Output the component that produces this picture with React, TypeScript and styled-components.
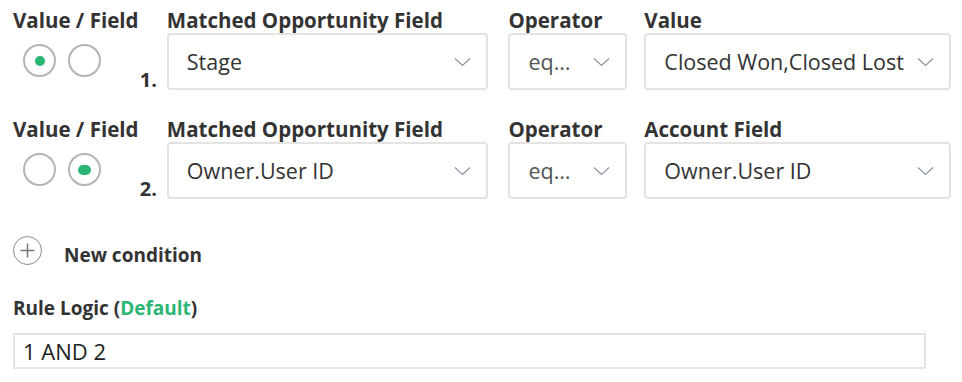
import styled, { createGlobalStyle } from "styled-components";

const GlobalStyle = createGlobalStyle`
  body {
    margin: 0;
    background: #fff;
    font-family: "Open Sans", "Noto Sans", sans-serif;
    color: #333;
  }
`;

const Page = styled.div`
  padding: 7px 11px 0 13px;
  width: 962px;
  box-sizing: border-box;
`;

const ConditionRow = styled.div`
  display: flex;
  align-items: flex-start;
  margin-bottom: 26px;
`;

const Label = styled.div<{ $size?: number }>`
  font-size: ${(p) => p.$size ?? 20.5}px;
  font-weight: 700;
  line-height: 26px;
  white-space: nowrap;
`;

const ToggleColumn = styled.div`
  width: 127px;
`;

const Radios = styled.div`
  display: flex;
  gap: 12px;
  margin: 11px 0 0 10px;
`;

const Radio = styled.span<{ $checked?: boolean; $wide?: boolean }>`
  width: 33px;
  height: 33px;
  box-sizing: border-box;
  border: 2px solid #b4b4b4;
  border-radius: 50%;
  display: grid;
  place-items: center;

  &::after {
    content: "";
    display: ${(p) => (p.$checked ? "block" : "none")};
    width: ${(p) => (p.$wide ? "13px" : "10px")};
    height: 10px;
    border-radius: 5px;
    background: #2bb673;
  }
`;

const Index = styled.div`
  width: 27px;
  align-self: flex-end;
  font-size: 20px;
  font-weight: 700;
  line-height: 20px;
`;

const FieldColumn = styled.div<{ $width: number; $gap?: number }>`
  width: ${(p) => p.$width}px;
  margin-right: ${(p) => p.$gap ?? 0}px;
`;

const Select = styled.div<{ $muted?: boolean }>`
  height: 57px;
  box-sizing: border-box;
  border: 2px solid #e3e3e3;
  border-radius: 4px;
  display: flex;
  align-items: center;
  padding: 0 15px 0 18px;
  font-size: 21.5px;
  color: ${(p) => (p.$muted ? "#555" : "#333")};
  background: #fff;
`;

const SelectText = styled.span<{ $max?: number }>`
  flex: 1;
  max-width: ${(p) => (p.$max ? `${p.$max}px` : "none")};
  white-space: nowrap;
  overflow: hidden;
  text-overflow: ellipsis;
`;

const Chevron = () => (
  <svg
    width="17"
    height="10"
    viewBox="0 0 17 10"
    style={{ marginLeft: "auto", flexShrink: 0 }}
  >
    <path d="M1 1.5 L8.5 8.5 L16 1.5" fill="none" stroke="#8a949f" strokeWidth="1.2" />
  </svg>
);

const AddRow = styled.div`
  display: flex;
  align-items: center;
  gap: 22px;
  margin-top: 43px;
`;

const AddButton = styled.button`
  width: 29px;
  height: 29px;
  padding: 0;
  border: 1.5px solid #8a8a8a;
  border-radius: 50%;
  background: #fff;
  display: grid;
  place-items: center;
  margin-top: -10px;
  cursor: pointer;
`;

const AddLabel = styled.span`
  font-size: 19px;
  font-weight: 700;
`;

const LogicLabel = styled(Label)`
  margin-top: 27px;
`;

const Green = styled.span`
  color: #2bb673;
`;

const LogicInput = styled.input`
  display: block;
  margin-top: 12px;
  width: 913px;
  height: 36px;
  box-sizing: border-box;
  border: 2px solid #e4e4e4;
  padding: 0 8px;
  font-family: "Open Sans", "Noto Sans", sans-serif;
  font-size: 22px;
  color: #222;
  outline: none;
`;

interface Condition {
  valueSelected: boolean;
  field: string;
  operator: string;
  targetLabel: string;
  target: string;
}

const conditions: Condition[] = [
  {
    valueSelected: true,
    field: "Stage",
    operator: "equals",
    targetLabel: "Value",
    target: "Closed Won,Closed Lost",
  },
  {
    valueSelected: false,
    field: "Owner.User ID",
    operator: "equals",
    targetLabel: "Account Field",
    target: "Owner.User ID",
  },
];

const App = () => {
  return (
    <>
      <GlobalStyle />
      <Page>
        {conditions.map((c, i) => (
          <ConditionRow key={i}>
            <ToggleColumn>
              <Label>Value / Field</Label>
              <Radios>
                <Radio $checked={c.valueSelected} />
                <Radio $checked={!c.valueSelected} $wide />
              </Radios>
            </ToggleColumn>
            <Index>{i + 1}.</Index>
            <FieldColumn $width={322} $gap={20}>
              <Label>Matched Opportunity Field</Label>
              <Select>
                <SelectText>{c.field}</SelectText>
                <Chevron />
              </Select>
            </FieldColumn>
            <FieldColumn $width={119} $gap={17}>
              <Label>Operator</Label>
              <Select $muted>
                <SelectText $max={50}>{c.operator}</SelectText>
                <Chevron />
              </Select>
            </FieldColumn>
            <FieldColumn $width={307}>
              <Label>{c.targetLabel}</Label>
              <Select>
                <SelectText>{c.target}</SelectText>
                <Chevron />
              </Select>
            </FieldColumn>
          </ConditionRow>
        ))}
        <AddRow>
          <AddButton aria-label="New condition">
            <svg width="17" height="17" viewBox="0 0 17 17">
              <path d="M8.5 1.5 V15.5 M1.5 8.5 H15.5" stroke="#777" strokeWidth="1.5" />
            </svg>
          </AddButton>
          <AddLabel>New condition</AddLabel>
        </AddRow>
        <LogicLabel $size={19}>
          Rule Logic (<Green>Default</Green>)
        </LogicLabel>
        <LogicInput defaultValue="1 AND 2" />
      </Page>
    </>
  );
};

export default App;
